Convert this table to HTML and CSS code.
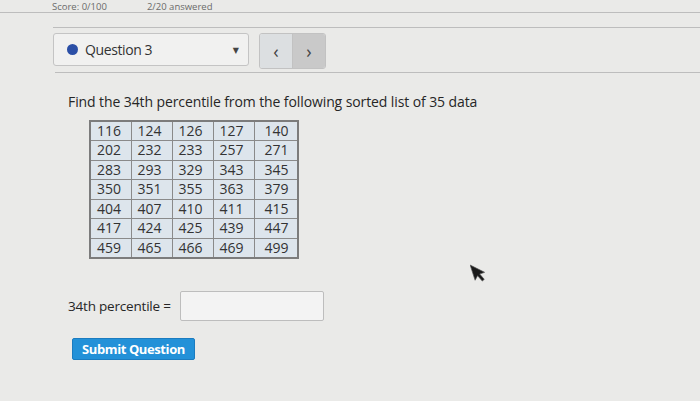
FILE: index.html
```html
<!DOCTYPE html>
<html>
<head>
<meta charset="utf-8">
<link rel="stylesheet" href="styles.css">
</head>
<body>
<div class="page">
  <div class="score"><span class="score-part">Score: 0/100</span><span class="score-part">2/20 answered</span></div>
  <div class="rule"></div>
  <div class="qbar">
    <div class="qselect">
      <span class="dot"></span>
      <span class="qlabel">Question 3</span>
      <span class="caret">&#9660;</span>
    </div>
    <div class="nav">
      <span class="navbtn prev">&lsaquo;</span>
      <span class="navbtn next">&rsaquo;</span>
    </div>
  </div>
  <div class="rule rule-q"></div>
  <div class="question">
    <p class="prompt">Find the 34th percentile from the following sorted list of 35 data</p>
    <table class="data">
      <tr><td>116</td><td>124</td><td>126</td><td>127</td><td>140</td></tr>
      <tr><td>202</td><td>232</td><td>233</td><td>257</td><td>271</td></tr>
      <tr><td>283</td><td>293</td><td>329</td><td>343</td><td>345</td></tr>
      <tr><td>350</td><td>351</td><td>355</td><td>363</td><td>379</td></tr>
      <tr><td>404</td><td>407</td><td>410</td><td>411</td><td>415</td></tr>
      <tr><td>417</td><td>424</td><td>425</td><td>439</td><td>447</td></tr>
      <tr><td>459</td><td>465</td><td>466</td><td>469</td><td>499</td></tr>
    </table>
    <div class="answer">
      <span class="answer-label">34th percentile =</span>
      <span class="answer-box"></span>
    </div>
    <button class="submit">Submit Question</button>
  </div>
  <svg class="cursor" width="16" height="22" viewBox="0 0 16 22">
    <path d="M3 1 L3 17 L6.8 13.4 L9.6 20 L12 19 L9.3 12.6 L14.5 12.4 Z" fill="#1a1a1a" stroke="#555" stroke-width="0.6" transform="rotate(-18 8 11)"/>
  </svg>
</div>
</body>
</html>
```
FILE: styles.css
```css
html, body {
  margin: 0;
  padding: 0;
}
body {
  background: #eaeae8;
  font-family: "Open Sans", "DejaVu Sans", sans-serif;
  color: #2a2a2a;
  width: 700px;
  height: 401px;
  overflow: hidden;
}
.page {
  position: relative;
  height: 401px;
}
.score {
  height: 11px;
  padding-top: 1px;
  display: flex;
  gap: 40px;
  padding-left: 52px;
  font-size: 9.5px;
  line-height: 11px;
  color: #6a6a6a;
}
.rule {
  height: 1px;
  background: #bdbdbd;
}
.qbar {
  display: flex;
  align-items: flex-start;
  gap: 10px;
  margin: 14px 0 0 53px;
  padding-top: 5px;
  border-top: 1px solid #bdbdbd;
}
.qselect {
  width: 181px;
  height: 31px;
  border: 1px solid #c4c4c4;
  border-radius: 3px;
  background: #f1f1f0;
  display: flex;
  align-items: center;
  padding-left: 13px;
}
.dot {
  width: 11px;
  height: 11px;
  border-radius: 50%;
  background: #2b4fa6;
  margin-right: 7px;
}
.qlabel {
  font-size: 14px;
  color: #333;
  letter-spacing: -0.4px;
  flex: 1;
}
.caret {
  font-size: 8px;
  color: #444;
  margin-right: 9px;
}
.nav {
  display: flex;
  height: 34px;
  border: 1px solid #c2c2c2;
  border-radius: 3px;
  overflow: hidden;
}
.navbtn {
  width: 32px;
  display: flex;
  align-items: center;
  justify-content: center;
  font-size: 18px;
  color: #444;
}
.prev {
  background: #dcdfe1;
  border-right: 1px solid #c2c2c2;
}
.next {
  background: #c9c9c9;
}
.rule-q {
  margin: 3px 0 0 55px;
}
.question {
  padding-left: 68px;
}
.prompt {
  margin: 20px 0 0 0;
  font-size: 14px;
  line-height: 18px;
  color: #262626;
  letter-spacing: -0.1px;
}
.data {
  border-collapse: collapse;
  margin: 9px 0 0 21px;
  border: 2px solid #7c7c7c;
}
.data td {
  width: 41px;
  height: 19.5px;
  padding: 0 0 0 6px;
  box-sizing: border-box;
  border: 1px solid #8a8a8a;
  background: #dde5ec;
  font-size: 14px;
  line-height: 18px;
  color: #333;
  text-align: left;
}
.data td:last-child {
  padding-left: 10px;
  width: 44px;
}
.answer {
  display: flex;
  align-items: center;
  margin-top: 32px;
}
.answer-label {
  font-size: 13.5px;
  color: #262626;
  margin-right: 9px;
  letter-spacing: -0.2px;
}
.answer-box {
  width: 142px;
  height: 28px;
  background: #f3f3f3;
  border: 1px solid #bdbdbd;
  border-radius: 2px;
}
.submit {
  display: block;
  margin: 17px 0 0 4px;
  width: 123px;
  height: 22px;
  padding: 0;
  border: 1px solid #1b7cc0;
  border-radius: 2px;
  background: #2391d8;
  color: #fff;
  font-family: "Open Sans", "DejaVu Sans", sans-serif;
  font-weight: 700;
  font-size: 13px;
  letter-spacing: -0.4px;
}
.cursor {
  position: absolute;
  left: 470px;
  top: 262px;
}
```
